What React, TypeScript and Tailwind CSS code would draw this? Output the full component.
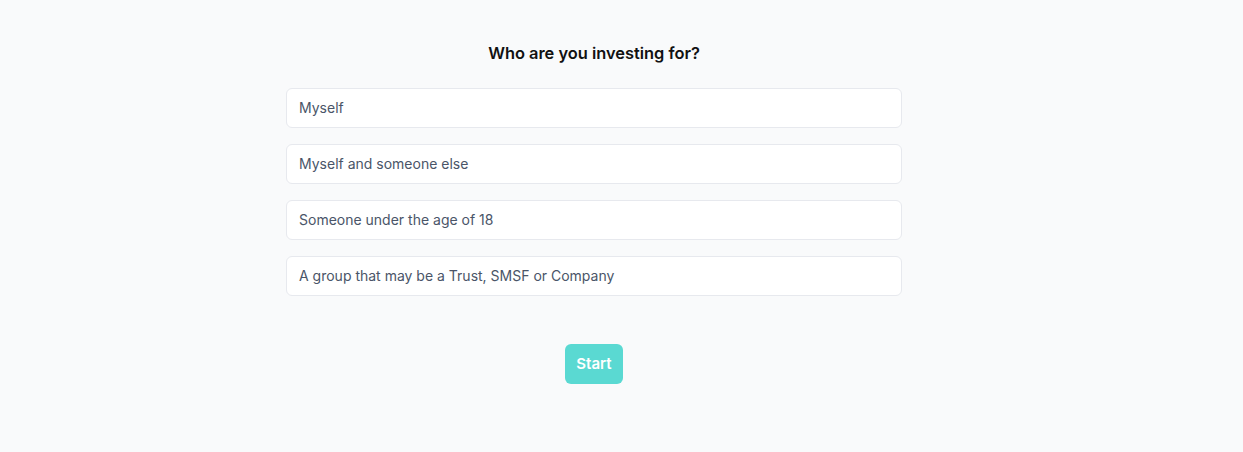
const options = [
  "Myself",
  "Myself and someone else",
  "Someone under the age of 18",
  "A group that may be a Trust, SMSF or Company",
];

export default function App() {
  return (
    <div className="min-h-[452px] w-full bg-[#f9fafb] font-['Inter',sans-serif]">
      <div className="flex flex-col items-center pt-[43px] pr-[55px]">
        <h1 className="text-[16.4px] font-semibold leading-[20px] text-[#111111]">Who are you investing for?</h1>
        <div className="mt-[25px] flex w-[616px] flex-col gap-4">
          {options.map((o) => (
            <button
              key={o}
              className="flex h-10 items-center rounded-md border border-[#e7e9ee] bg-white px-[12px] pb-px text-left text-[14px] text-[#4a5568]"
            >
              {o}
            </button>
          ))}
        </div>
        <button className="mt-12 h-10 w-[58px] rounded-md bg-[#5ad9d2] text-[15px] font-semibold text-white">
          Start
        </button>
      </div>
    </div>
  );
}
